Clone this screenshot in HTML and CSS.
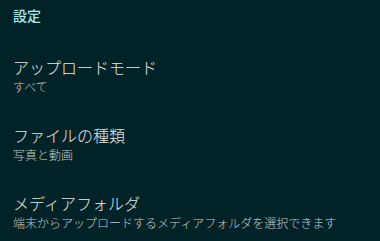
FILE: index.html
```html
<!DOCTYPE html>
<html lang="ja">

<head>
    <meta charset="UTF-8">
    <meta name="viewport" content="width=device-width, initial-scale=1.0">
    <title>設定</title>
    <link rel="stylesheet" href="styles.css">
</head>

<body>
    <div class="settings">
        <div class="settings-header">設定</div>

        <div class="setting-item">
            <div class="setting-title">アップロードモード</div>
            <div class="setting-summary">すべて</div>
        </div>

        <div class="setting-item">
            <div class="setting-title">ファイルの種類</div>
            <div class="setting-summary">写真と動画</div>
        </div>

        <div class="setting-item">
            <div class="setting-title">メディアフォルダ</div>
            <div class="setting-summary">端末からアップロードするメディアフォルダを選択できます</div>
        </div>
    </div>
</body>

</html>
```

FILE: styles.css
```css
body {
    font-family: 'Noto Sans CJK JP', 'Noto Sans', sans-serif;
    background-color: #012226;
    margin: 0;
    height: 100vh;
    overflow: hidden;
}

.settings {
    display: flex;
    flex-direction: column;
}

.settings-header {
    padding: 6px 13px 17px;
    font-size: 14px;
    line-height: 19px;
    font-weight: 500;
    color: #a4e9f2;
}

.setting-item {
    padding: 15px 13px 15px;
    display: flex;
    flex-direction: column;
}

.setting-title {
    font-size: 16px;
    line-height: 20px;
    font-weight: 300;
    color: #e3e8e8;
}

.setting-summary {
    margin-top: 2px;
    font-size: 12px;
    line-height: 16px;
    font-weight: 300;
    color: #c3cbcb;
}
```
